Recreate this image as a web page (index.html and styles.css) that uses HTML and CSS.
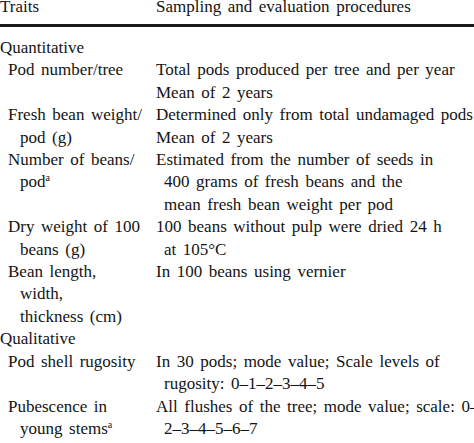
FILE: index.html
```html
<!DOCTYPE html>
<html>
<head>
<meta charset="utf-8">
<link rel="stylesheet" href="styles.css">
</head>
<body>
<div class="table">
  <div class="head">
    <div class="trait-h">Traits</div>
    <div class="proc-h">Sampling and evaluation procedures</div>
  </div>
  <div class="rule"></div>
  <div class="body">
    <div class="group">Quantitative</div>
    <div class="row">
      <div class="trait">Pod number/tree</div>
      <div class="proc"><p>Total pods produced per tree and per year</p><p>Mean of 2 years</p></div>
    </div>
    <div class="row">
      <div class="trait">Fresh bean weight/<br>pod (g)</div>
      <div class="proc"><p>Determined only from total undamaged pods</p><p>Mean of 2 years</p></div>
    </div>
    <div class="row">
      <div class="trait">Number of beans/<br>pod<sup>a</sup></div>
      <div class="proc"><p>Estimated from the number of seeds in<br>400 grams of fresh beans and the<br>mean fresh bean weight per pod</p></div>
    </div>
    <div class="row">
      <div class="trait">Dry weight of 100<br>beans (g)</div>
      <div class="proc"><p>100 beans without pulp were dried 24 h<br>at 105°C</p></div>
    </div>
    <div class="row">
      <div class="trait">Bean length,<br>width,<br>thickness (cm)</div>
      <div class="proc"><p>In 100 beans using vernier</p></div>
    </div>
    <div class="group">Qualitative</div>
    <div class="row">
      <div class="trait">Pod shell rugosity</div>
      <div class="proc"><p>In 30 pods; mode value; Scale levels of<br>rugosity: 0–1–2–3–4–5</p></div>
    </div>
    <div class="row">
      <div class="trait">Pubescence in<br>young stems<sup>a</sup></div>
      <div class="proc"><p>All flushes of the tree; mode value; scale: 0–1–<br>2–3–4–5–6–7</p></div>
    </div>
  </div>
</div>
</body>
</html>
```
FILE: styles.css
```css
html, body {
  margin: 0;
  padding: 0;
  background: #ffffff;
  overflow: hidden;
}
body {
  width: 474px;
  height: 443px;
}
.table {
  font-family: "Liberation Serif", "Times New Roman", serif;
  font-size: 17px;
  line-height: 22.4px;
  word-spacing: 2.3px;
  color: #141414;
  white-space: nowrap;
}
.head {
  display: grid;
  grid-template-columns: 156px 1fr;
  line-height: 14px;
  padding-bottom: 10px;
}
.rule {
  height: 3px;
  background: #1a1a1a;
  margin-bottom: 10px;
}
.group {
  padding-left: 0;
}
.row {
  display: grid;
  grid-template-columns: 156px 1fr;
}
.trait {
  padding-left: 20px;
  text-indent: -12px;
}
.proc p {
  margin: 0;
  padding-left: 8px;
  text-indent: -8px;
}
sup {
  font-size: 10px;
  line-height: 0;
  vertical-align: 6px;
}
```
